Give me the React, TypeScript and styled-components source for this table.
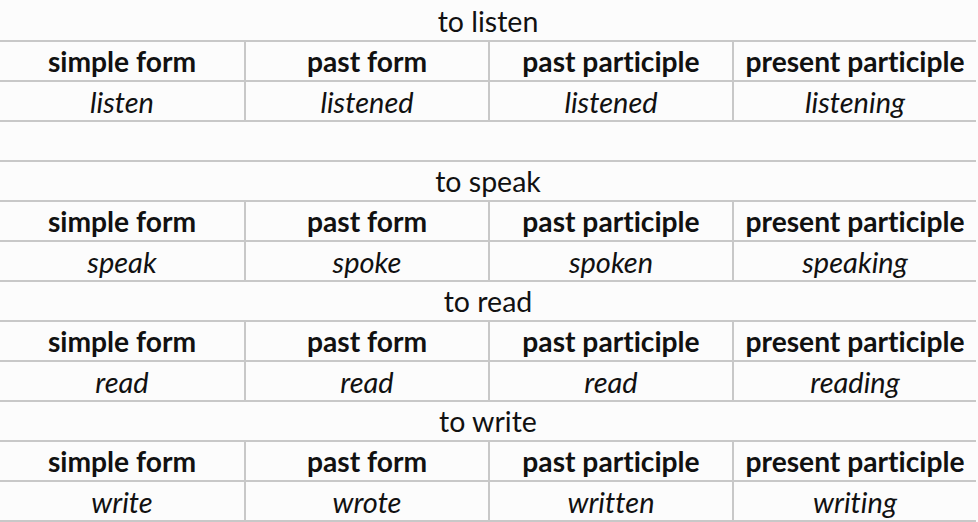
import React from "react";
import styled, { createGlobalStyle } from "styled-components";

const Global = createGlobalStyle`
  html, body { margin: 0; padding: 0; background: #fcfcfc; }
  body {
    font-family: Lato, "Open Sans", "Liberation Sans", sans-serif;
    color: #111;
    font-variant-ligatures: none;
    font-feature-settings: "liga" 0, "clig" 0, "dlig" 0;
  }
`;

const Sheet = styled.div`
  width: 976px;
  padding-top: 2px;
  display: flex;
  flex-direction: column;
  background: #fcfcfc;
`;

const Row = styled.div`
  height: 38px;
  border-bottom: 2px solid #c8c8c8;
  display: grid;
  grid-template-columns: 246px 244px 244px 1fr;
`;

const TitleRow = styled.div`
  height: 38px;
  border-bottom: 2px solid #c8c8c8;
  display: flex;
  align-items: center;
  justify-content: center;
  font-size: 28.5px;
  font-weight: 400;
`;

const Cell = styled.div<{ $head?: boolean; $last?: boolean }>`
  display: flex;
  align-items: center;
  justify-content: center;
  border-right: ${(p) => (p.$last ? "none" : "2px solid #c8c8c8")};
  font-size: ${(p) => (p.$head ? "28.2px" : "29px")};
  font-weight: ${(p) => (p.$head ? 700 : 400)};
  font-style: ${(p) => (p.$head ? "normal" : "italic")};
  white-space: nowrap;
`;

const heads = ["simple form", "past form", "past participle", "present participle"];

const verbs: { title: string; forms: string[]; gap?: boolean }[] = [
  { title: "to listen", forms: ["listen", "listened", "listened", "listening"], gap: true },
  { title: "to speak", forms: ["speak", "spoke", "spoken", "speaking"] },
  { title: "to read", forms: ["read", "read", "read", "reading"] },
  { title: "to write", forms: ["write", "wrote", "written", "writing"] },
];

export default function App() {
  return (
    <>
      <Global />
      <Sheet>
        {verbs.map((v) => (
          <React.Fragment key={v.title}>
            <TitleRow>{v.title}</TitleRow>
            <Row>
              {heads.map((h, i) => (
                <Cell key={h} $head $last={i === 3}>{h}</Cell>
              ))}
            </Row>
            <Row>
              {v.forms.map((f, i) => (
                <Cell key={i} $last={i === 3}>{f}</Cell>
              ))}
            </Row>
            {v.gap && <TitleRow />}
          </React.Fragment>
        ))}
      </Sheet>
    </>
  );
}
